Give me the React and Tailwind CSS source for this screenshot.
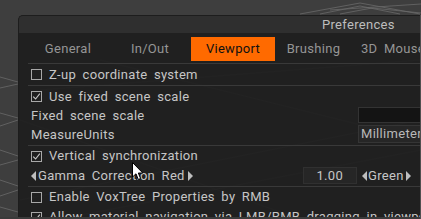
import React from 'react';

const font = { fontFamily: 'Roboto, "Noto Sans", sans-serif' };

const Check = ({ checked }) => (
  <span className="w-[11px] h-[11px] border border-[#a8a8a8] flex items-center justify-center shrink-0">
    {checked && (
      <svg width="9" height="9" viewBox="0 0 9 9">
        <path d="M1.2 4.6 L3.6 7 L7.8 1.6" fill="none" stroke="#c8c8c8" strokeWidth="1.1" />
      </svg>
    )}
  </span>
);

const Tri = ({ dir }) => (
  <svg width="5" height="10" viewBox="0 0 5 10" className="shrink-0">
    {dir === 'left' ? <path d="M5 0 L0 5 L5 10 Z" fill="#bdbdbd" /> : <path d="M0 0 L5 5 L0 10 Z" fill="#bdbdbd" />}
  </svg>
);

const Sep = () => <div className="h-px bg-[#393939] ml-[9px]" />;

const CheckRow = ({ checked, label, h = 'h-[21px]' }) => (
  <div className={`${h} flex items-center gap-[7px] pl-[12px]`}>
    <Check checked={checked} />
    <span className="whitespace-nowrap">{label}</span>
  </div>
);

const tabs = [
  { name: 'General', w: 'w-[82px]' },
  { name: 'In/Out', w: 'w-[82px]' },
  { name: 'Viewport', w: 'w-[84px]', active: true },
  { name: 'Brushing', w: 'w-[77px]' },
  { name: '3D Mouse', w: 'w-[82px]' },
];

const Grid = () => (
  <svg className="absolute inset-0" width="421" height="219" viewBox="0 0 421 219">
    <g stroke="#6a6a6a" strokeWidth="0.8" fill="none">
      <path d="M300 14 L360 3 L420 14" />
      <path d="M320 14 L360 6 L400 14" />
      <path d="M340 14 L372 8 L421 13" />
      <path d="M330 10 L421 4" />
      <path d="M0 77 L18 82" />
      <path d="M0 88 L18 84" />
      <path d="M0 113 L18 118" />
      <path d="M0 126 L18 120" />
      <path d="M0 150 L18 156" />
      <path d="M0 165 L18 160" />
      <path d="M0 180 L18 186" />
      <path d="M0 196 L18 190" />
      <path d="M0 207 L18 212" />
      <path d="M40 90 L420 60" />
      <path d="M20 200 L420 120" />
      <path d="M60 219 L421 150" />
      <path d="M100 60 L421 140" />
      <path d="M20 120 L300 219" />
    </g>
  </svg>
);

export default function App() {
  return (
    <div className="relative w-[421px] h-[219px] overflow-hidden bg-[#3e3e3e] pt-[15px] pl-[18px] text-[13px] text-[#c6c6c6] [word-spacing:3px] tracking-[0.3px]" style={font}>
      <Grid />
      <div className="relative w-[720px] h-[210px] rounded-tl-[5px] border-l border-t border-[#1d1d1d] bg-[#1f1f1f]/[0.94] overflow-hidden">
        <div className="h-[17px] bg-[#2f2f2f] flex items-center pl-[303px] text-[#bdbdbd]">Preferences</div>
        <div className="flex pl-[8px] pt-[4px] h-[30px] items-start">
          {tabs.map((t) => (
            <div
              key={t.name}
              className={`${t.w} h-[24px] flex items-center justify-center whitespace-nowrap ${t.active ? 'bg-[#ff6a00] text-[#111]' : 'text-[#959595]'}`}
            >
              {t.name}
            </div>
          ))}
        </div>
        <Sep />
        <CheckRow label="Z-up coordinate system" />
        <Sep />
        <CheckRow checked label="Use fixed scene scale" />
        <div className="h-[18px] flex items-center pl-[12px] relative">
          <span>Fixed scene scale</span>
          <div className="absolute left-[339px] top-0 w-[80px] h-[16px] bg-[#141414] border border-[#333]" />
        </div>
        <div className="h-[20px] flex items-center pl-[12px] relative">
          <span>MeasureUnits</span>
          <div className="absolute left-[339px] top-0 w-[80px] h-[18px] bg-[#262626] border border-[#353535] flex items-center pl-[2px] text-[#b8b8b8]">Millimeter</div>
        </div>
        <Sep />
        <CheckRow checked label="Vertical synchronization" h="h-[20px]" />
        <div className="h-[20px] flex items-center pl-[12px] relative">
          <Tri dir="left" />
          <span className="ml-[2px] mr-[3px]">Gamma Correction Red</span>
          <Tri dir="right" />
          <div className="absolute left-[284px] top-[1px] w-[54px] h-[17px] bg-[#262626] border border-[#303030] flex items-center justify-end pr-[13px]">1.00</div>
          <div className="absolute left-[343px] top-0 h-[20px] flex items-center">
            <Tri dir="left" />
            <span className="ml-[1px] mr-[2px]">Green</span>
            <Tri dir="right" />
          </div>
        </div>
        <Sep />
        <CheckRow label="Enable VoxTree Properties by RMB" h="h-[20px]" />
        <CheckRow checked label="Allow material navigation via LMB/RMB dragging in viewport" h="h-[20px]" />
      </div>
      <div className="absolute left-0 right-0 bottom-0 h-[2px] bg-[#3a3a3a]" />
      <div className="absolute right-0 top-[15px] bottom-0 w-px bg-[#505050]" />
      <svg className="absolute left-[132px] top-[162px]" width="12" height="19" viewBox="0 0 12 19">
        <path d="M0.5 0.5 L0.5 15 L4 11.8 L6.3 17.5 L8.6 16.5 L6.3 11 L10.8 11 Z" fill="#fff" stroke="#000" strokeWidth="1" />
      </svg>
    </div>
  );
}
